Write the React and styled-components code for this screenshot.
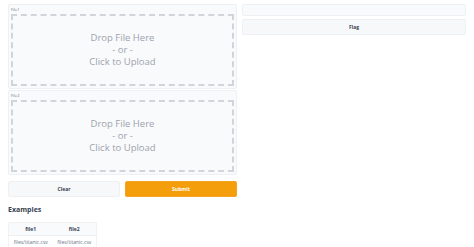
import React from 'react';
import styled, { createGlobalStyle } from 'styled-components';

const GlobalStyle = createGlobalStyle`
  *, *::before, *::after { box-sizing: border-box; }
  body {
    margin: 0;
    background: #ffffff;
    font-family: "Open Sans", "Noto Sans", sans-serif;
  }
`;

const Page = styled.div`
  display: grid;
  grid-template-columns: 229px 224px;
  gap: 5px;
  padding: 4px 8px;
  align-items: start;
`;

const Column = styled.div`
  display: flex;
  flex-direction: column;
  gap: ${p => p.gap || 4}px;
`;

const Block = styled.div`
  background: #f9fafb;
  border: 1px solid #eef0f3;
  border-radius: 2px;
  padding: 2px;
`;

const Label = styled.div`
  font-size: 4px;
  line-height: 5px;
  height: 5px;
  color: #6b7280;
  margin-bottom: 2px;
`;

const DropZone = styled.div`
  height: 72px;
  border: 2px dashed #d1d5db;
  display: flex;
  flex-direction: column;
  align-items: center;
  justify-content: center;
  color: #9ca3af;
  font-size: 9.5px;
  line-height: 12px;
  text-align: center;
`;

const ButtonRow = styled.div`
  display: grid;
  grid-template-columns: 1fr 1fr;
  gap: 5px;
  margin-top: 5px;
`;

const Button = styled.button`
  height: 16px;
  border-radius: 2px;
  border: 1px solid ${p => (p.primary ? '#f6a323' : '#eef0f3')};
  background: ${p => (p.primary ? '#f59e0b' : '#f7f8fa')};
  color: ${p => (p.primary ? '#ffffff' : '#374151')};
  font-family: "Open Sans", sans-serif;
  font-size: 5px;
  font-weight: 700;
  padding: 0;
`;

const OutputBox = styled.div`
  height: 12px;
  background: #f9fafb;
  border: 1px solid #eef0f3;
  border-radius: 2px;
`;

const Heading = styled.div`
  font-size: 7px;
  line-height: 9px;
  font-weight: 700;
  color: #374151;
  margin-top: 7px;
`;

const Table = styled.table`
  border-collapse: collapse;
  width: 89px;
  margin-top: 7px;
  font-size: 5px;
  color: #374151;
  border: 1px solid #f1f2f4;
`;

const Th = styled.th`
  font-weight: 700;
  padding: 3px 2px;
  background: #f9fafb;
  border-bottom: 1px solid #eef0f3;
`;

const Td = styled.td`
  padding: 3px 2px;
  text-align: center;
  color: #6b7280;
`;

const Upload = ({ label }) => (
  <Block>
    <Label>{label}</Label>
    <DropZone>
      <div>Drop File Here</div>
      <div>- or -</div>
      <div>Click to Upload</div>
    </DropZone>
  </Block>
);

const App = () => (
  <>
    <GlobalStyle />
    <Page>
      <Column gap={1}>
        <Upload label="File1" />
        <Upload label="File2" />
        <ButtonRow>
          <Button>Clear</Button>
          <Button primary>Submit</Button>
        </ButtonRow>
        <Heading>Examples</Heading>
        <Table>
          <thead>
            <tr>
              <Th>file1</Th>
              <Th>file2</Th>
            </tr>
          </thead>
          <tbody>
            <tr>
              <Td>files/titanic.csv</Td>
              <Td>files/titanic.csv</Td>
            </tr>
          </tbody>
        </Table>
      </Column>
      <Column gap={3}>
        <OutputBox />
        <Button>Flag</Button>
      </Column>
    </Page>
  </>
);

export default App;
